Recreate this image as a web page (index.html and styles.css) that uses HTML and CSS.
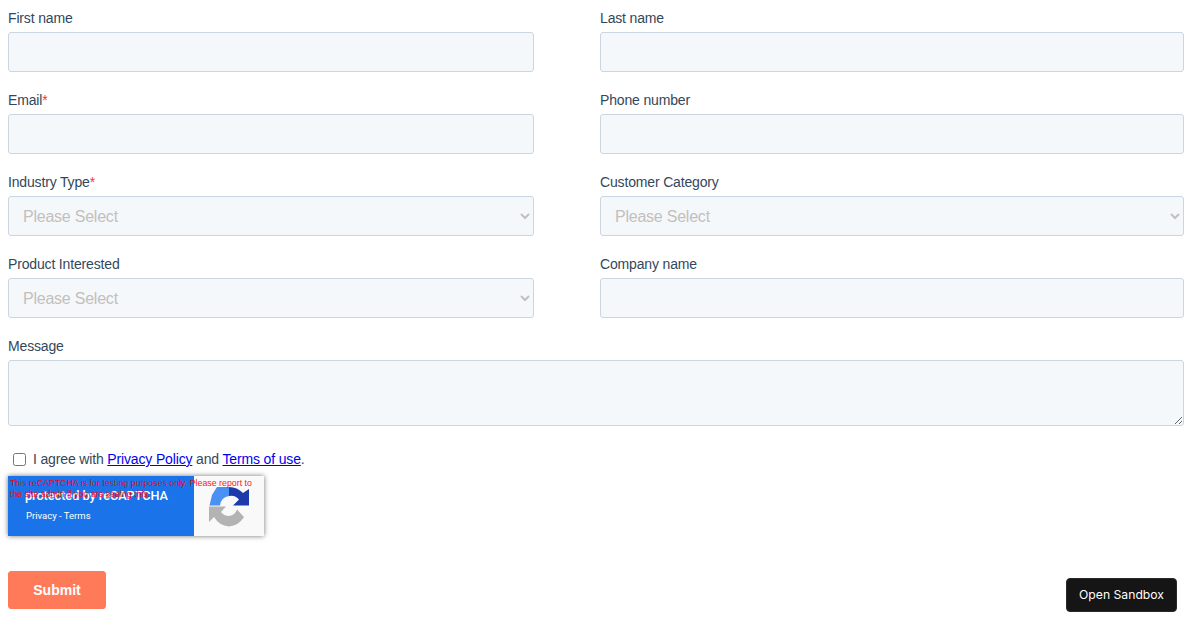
FILE: index.html
```html
<!DOCTYPE html>
<html lang="en">
<head>
<meta charset="utf-8">
<title>Contact form</title>
<link rel="stylesheet" href="styles.css">
</head>
<body>
<form class="form">
  <div class="grid">
    <div class="field"><label class="label">First name</label><input class="control" type="text"></div>
    <div class="field"><label class="label">Last name</label><input class="control" type="text"></div>
    <div class="field"><label class="label">Email<span class="req">*</span></label><input class="control" type="email"></div>
    <div class="field"><label class="label">Phone number</label><input class="control" type="tel"></div>
    <div class="field"><label class="label">Industry Type<span class="req">*</span></label><select class="control select"><option>Please Select</option></select></div>
    <div class="field"><label class="label">Customer Category</label><select class="control select"><option>Please Select</option></select></div>
    <div class="field"><label class="label">Product Interested</label><select class="control select"><option>Please Select</option></select></div>
    <div class="field"><label class="label">Company name</label><input class="control" type="text"></div>
    <div class="field wide"><label class="label">Message</label><textarea class="control area"></textarea></div>
  </div>
  <label class="agree"><input class="check" type="checkbox"><span>I agree with <a href="#">Privacy Policy</a> and <a href="#">Terms of use</a>.</span></label>
  <div class="badge">
    <div class="badge-blue">
      <div class="badge-title">protected by reCAPTCHA</div>
      <div class="badge-links">Privacy - Terms</div>
    </div>
    <div class="badge-logo">
      <svg class="logo" width="44" height="44" viewBox="0 0 44 44">
        <path fill="#b3b3b3" d="M1 21.5V37L6 32A19.5 19.5 0 0 0 21 41.5A20 20 0 0 0 36 32L29 24.5A9.5 9.5 0 0 1 21 31A10 10 0 0 1 13 27L18 21.5Z"/>
        <path fill="#1c3aa9" d="M21 2A19.5 19.5 0 0 1 35 8L41 4V20.5H25L31 14.5A10 10 0 0 0 21 11Z"/>
        <path fill="#4a90f5" d="M21 2V11A10 10 0 0 0 12 20.5H1.5L4 10L9 2Z"/>
      </svg>
    </div>
    <div class="badge-warn">This reCAPTCHA is for testing purposes only. Please report to the site admin if you are seeing this.</div>
  </div>
  <button class="submit" type="button">Submit</button>
</form>
<button class="sandbox" type="button">Open Sandbox</button>
</body>
</html>
```
FILE: styles.css
```css
* { box-sizing: border-box; }
html, body { margin: 0; height: 630px; overflow: hidden; background: #fff; }
body { font-family: "Liberation Sans", Arial, sans-serif; font-size: 14px; color: #33475b; position: relative; }
.form { padding: 8px 16px 0 8px; }
.grid { display: grid; grid-template-columns: 526px 584px; column-gap: 66px; row-gap: 18px; }
.field { display: flex; flex-direction: column; }
.wide { grid-column: 1 / -1; }
.label { display: block; line-height: 20px; margin-bottom: 4px; letter-spacing: -0.16px; }
.req { color: #f5333f; }
.control { display: block; width: 100%; height: 40px; margin: 0; background-color: #f5f8fa; border: 1px solid #cbd6e2; border-radius: 3px; font-family: inherit; font-size: 16px; color: #33475b; outline: none; }
.select { padding-left: 10px; color: #c2bfbf; letter-spacing: -0.23px; }
.area { height: 66px; }
.agree { display: flex; align-items: center; height: 20px; margin-top: 23px; padding-left: 5px; line-height: 20px; letter-spacing: -0.15px; }
.check { width: 13px; height: 13px; margin: 0 7px 0 0; }
.agree span { white-space: nowrap; }
.badge { position: relative; display: flex; width: 256px; height: 60px; margin-top: 7px; box-shadow: 0 0 5px rgba(0, 0, 0, 0.55); font-family: "Roboto", "Liberation Sans", sans-serif; }
.badge-blue { width: 186px; background: #1a73e8; color: #fff; padding: 12px 0 0 17px; }
.badge-title { font-size: 12.65px; line-height: 16px; font-weight: 500; white-space: nowrap; }
.badge-links { font-size: 9.5px; line-height: 12px; margin-top: 6px; padding-left: 1px; white-space: nowrap; }
.badge-logo { flex: 1; background: #f9f9f9; padding: 9px 0 0 14px; }
.logo { display: block; }
.badge-warn { position: absolute; left: 2px; top: 2px; width: 250px; font-family: "Liberation Sans", Arial, sans-serif; font-size: 8.8px; line-height: 11px; color: #f00; opacity: 0.9; }
.submit { display: block; width: 98px; height: 38px; margin-top: 35px; padding: 0; border: 1px solid #ff7a59; border-radius: 3px; background: #ff7a59; color: #fff; font-family: inherit; font-size: 14px; font-weight: 700; }
.sandbox { position: absolute; left: 1066px; top: 578px; width: 111px; height: 34px; padding: 0 0 2px; border: 1px solid #2a2a2a; border-radius: 4px; background: #151515; color: #fff; font-family: "Inter", sans-serif; font-size: 12.2px; }
```
